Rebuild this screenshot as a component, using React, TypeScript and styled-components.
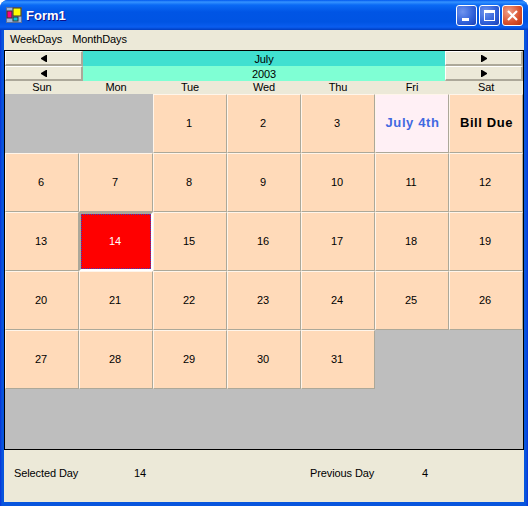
import { ReactElement } from "react";
import styled, { createGlobalStyle } from "styled-components";

const GlobalStyle = createGlobalStyle`
  html, body {
    margin: 0;
    padding: 0;
    background: #fff;
  }
  * {
    box-sizing: border-box;
  }
`;

const Window = styled.div`
  width: 528px;
  height: 506px;
  display: flex;
  flex-direction: column;
  overflow: hidden;
  border-radius: 8px 8px 0 0;
  font-family: Tahoma, "Liberation Sans", "DejaVu Sans", sans-serif;
  font-size: 11px;
  letter-spacing: -0.1px;
  color: #000;
  background: linear-gradient(90deg, #0831d9 0, #0855dd 2px, #0855dd 526px, #0831d9 528px);
`;

const TitleBar = styled.div`
  height: 30px;
  flex: none;
  display: flex;
  align-items: center;
  padding: 0 5px 0 6px;
  background: linear-gradient(
    180deg,
    #0058ee 0,
    #3593ff 2px,
    #0a6af5 5px,
    #0055e5 12px,
    #0054e3 22px,
    #0a5df0 27px,
    #003dc0 30px
  );
`;

const Title = styled.span`
  margin-left: 4px;
  flex: 1;
  color: #fff;
  font-size: 13px;
  font-weight: 700;
  letter-spacing: 0;
  text-shadow: 1px 1px 0 #0f1089;
`;

const Controls = styled.div`
  display: flex;
  gap: 2px;
`;

const ControlButton = styled.div<{ $close?: boolean }>`
  width: 21px;
  height: 21px;
  display: flex;
  align-items: center;
  justify-content: center;
  border: 1px solid #fff;
  border-radius: 3px;
  background: ${(p) =>
    p.$close
      ? "radial-gradient(circle at 30% 30%, #f0a08a, #d9502c 60%, #b8330f)"
      : "radial-gradient(circle at 30% 30%, #6f94ee, #2f5fd8 60%, #1b3fb5)"};
`;

const Body = styled.div`
  flex: 1;
  margin: 0 4px 4px;
  display: flex;
  flex-direction: column;
  background: #ece9d8;
`;

const MenuBar = styled.div`
  height: 20px;
  flex: none;
  display: flex;
  align-items: center;
  gap: 10px;
  padding: 0 0 2px 6px;
`;

const Calendar = styled.div`
  height: 400px;
  flex: none;
  border: 1px solid #000;
  display: flex;
  flex-direction: column;
  background: #bebebe;
`;

const NavRow = styled.div`
  height: 15px;
  flex: none;
  display: grid;
  grid-template-columns: 78px 1fr 78px;
`;

const NavButton = styled.div`
  display: flex;
  align-items: center;
  justify-content: center;
  background: #ece9d8;
  border-style: solid;
  border-width: 1px 2px 2px 1px;
  border-color: #fff #aca899 #aca899 #fff;
`;

const NavLabel = styled.div<{ $color: string }>`
  display: flex;
  align-items: center;
  justify-content: center;
  background: ${(p) => p.$color};
`;

const DayNames = styled.div`
  height: 13px;
  flex: none;
  display: grid;
  grid-template-columns: repeat(7, 74px);
  background: #ece9d8;
`;

const DayName = styled.div`
  text-align: center;
  line-height: 13px;
`;

const Grid = styled.div`
  display: grid;
  grid-template-columns: repeat(7, 74px);
  grid-auto-rows: 59px;
`;

const Cell = styled.div<{ $bg: string; $selected?: boolean; $empty?: boolean }>`
  display: flex;
  align-items: center;
  justify-content: center;
  padding: 0 2px 2px 0;
  background-color: ${(p) => p.$bg};
  color: ${(p) => (p.$selected ? "#fff" : "#000")};
  border-style: solid;
  border-width: 1px;
  border-color: ${(p) =>
    p.$empty ? "transparent" : "#fff5ea #aca899 #aca899 #fff5ea"};
  ${(p) =>
    p.$selected &&
    `
    border-width: 2px;
    border-color: #aca899 #fff #fff #aca899;
    background-image:
      repeating-linear-gradient(90deg, #3b3fc8 0 1px, transparent 1px 2px),
      repeating-linear-gradient(90deg, #3b3fc8 0 1px, transparent 1px 2px),
      repeating-linear-gradient(0deg, #3b3fc8 0 1px, transparent 1px 2px),
      repeating-linear-gradient(0deg, #3b3fc8 0 1px, transparent 1px 2px);
    background-size: 100% 1px, 100% 1px, 1px 100%, 1px 100%;
    background-position: 0 0, 0 100%, 0 0, 100% 0;
    background-repeat: no-repeat;
    background-clip: padding-box;
    background-origin: padding-box;
  `}
`;

const EventText = styled.span<{ $color: string }>`
  color: ${(p) => p.$color};
  font-family: "Liberation Sans", Arial, sans-serif;
  font-size: 13px;
  font-weight: 700;
  letter-spacing: 0.6px;
  padding-left: 3px;
`;

const Footer = styled.div`
  flex: 1;
  display: grid;
  grid-template-columns: 120px 176px 112px 1fr;
  align-items: center;
  padding: 0 0 6px 10px;
`;

const Arrow = ({ right }: { right?: boolean }): ReactElement => (
  <svg width="8" height="7" viewBox="0 0 8 7">
    <path
      d={right ? "M1 0V7H2L7 4V3L2 0Z" : "M7 0V7H6L1 4V3L6 0Z"}
      fill="#000"
    />
  </svg>
);

const FormIcon = (): ReactElement => (
  <svg width="16" height="16" viewBox="0 0 16 16">
    <rect x="0.5" y="0.5" width="15" height="15" fill="#9fb4d8" stroke="#5a6f9a" />
    <rect x="7" y="1" width="8" height="8" fill="#ffff00" stroke="#333" />
    <rect x="1" y="4" width="5" height="7" fill="#ff0080" stroke="#333" />
    <rect x="7" y="10" width="5" height="4" fill="#00c8d8" stroke="#333" />
  </svg>
);

type Day = { n?: number; event?: string; color?: string; bg?: string };

const cells: Day[] = [
  {},
  {},
  { n: 1 },
  { n: 2 },
  { n: 3 },
  { event: "July 4th", color: "#4169e1", bg: "#fff0f5" },
  { event: "Bill Due", color: "#000" },
  ...Array.from({ length: 26 }, (_, i) => ({ n: i + 6 })),
];

function App(): ReactElement {
  return (
    <Window>
      <GlobalStyle />
      <TitleBar>
        <FormIcon />
        <Title>Form1</Title>
        <Controls>
          <ControlButton>
            <svg width="13" height="13" viewBox="0 0 13 13">
              <rect x="2" y="9" width="7" height="3" fill="#fff" />
            </svg>
          </ControlButton>
          <ControlButton>
            <svg width="13" height="13" viewBox="0 0 13 13">
              <path d="M1 1H12V12H1Z M2 4V11H11V4Z" fill="#fff" fillRule="evenodd" />
            </svg>
          </ControlButton>
          <ControlButton $close>
            <svg width="13" height="13" viewBox="0 0 13 13">
              <path d="M2 2L11 11M11 2L2 11" stroke="#fff" strokeWidth="2.2" />
            </svg>
          </ControlButton>
        </Controls>
      </TitleBar>
      <Body>
        <MenuBar>
          <span>WeekDays</span>
          <span>MonthDays</span>
        </MenuBar>
        <Calendar>
          <NavRow>
            <NavButton><Arrow /></NavButton>
            <NavLabel $color="#40e0d0">July</NavLabel>
            <NavButton><Arrow right /></NavButton>
          </NavRow>
          <NavRow>
            <NavButton><Arrow /></NavButton>
            <NavLabel $color="#7fffd4">2003</NavLabel>
            <NavButton><Arrow right /></NavButton>
          </NavRow>
          <DayNames>
            {["Sun", "Mon", "Tue", "Wed", "Thu", "Fri", "Sat"].map((d) => (
              <DayName key={d}>{d}</DayName>
            ))}
          </DayNames>
          <Grid>
            {cells.map((c, i) => {
              if (!c.n && !c.event) {
                return <Cell key={i} $bg="#bebebe" $empty />;
              }
              return (
                <Cell
                  key={i}
                  $bg={c.n === 14 ? "#ff0000" : c.bg ?? "#ffdab9"}
                  $selected={c.n === 14}
                >
                  {c.event ? (
                    <EventText $color={c.color!}>{c.event}</EventText>
                  ) : (
                    c.n
                  )}
                </Cell>
              );
            })}
          </Grid>
        </Calendar>
        <Footer>
          <span>Selected Day</span>
          <span>14</span>
          <span>Previous Day</span>
          <span>4</span>
        </Footer>
      </Body>
    </Window>
  );
}

export default App;
